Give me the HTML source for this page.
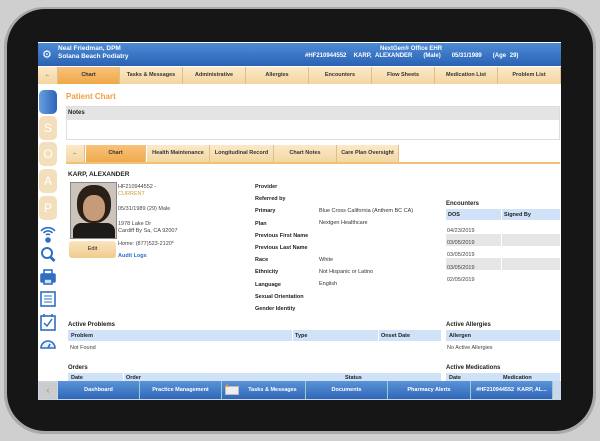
<!DOCTYPE html>
<html><head><meta charset="utf-8"><style>
*{margin:0;padding:0;box-sizing:border-box}
body{width:600px;height:441px;background:#cfcfcf;position:relative;overflow:hidden;font-family:"Liberation Sans",sans-serif;font-size:5.5px;color:#222}
.a{position:absolute;white-space:nowrap}
.b{font-weight:bold}
.tab{position:absolute;height:17px;background:linear-gradient(#fbe9c8,#f3d6a0);border-right:1px solid #e0c08a;font-weight:bold;font-size:5.5px;text-align:center;line-height:17px;color:#333}
.tab.on{background:linear-gradient(#f8c27a,#f0a848)}
.hdr{position:absolute;height:11px;background:#cfe2f7}
.bt{position:absolute;top:381px;height:18px;background:linear-gradient(#5b93d8,#2f66b8);color:#fff;font-weight:bold;font-size:5.5px;text-align:center;line-height:18px;border-right:1px solid #9cc}
.sb{position:absolute;left:39px;width:18px;height:24px;border-radius:5px;background:#f4dfbd;color:#fff;font-size:12px;text-align:center;line-height:24px}
</style></head><body>
<div class="a" style="left:4px;top:7px;width:592px;height:427px;border-radius:40px;background:#a9a9a9"></div>
<div class="a" style="left:7px;top:9px;width:586px;height:422px;border-radius:38px;background:#161616"></div>
<div class="a" style="left:38px;top:42px;width:523px;height:358px;background:#fff"></div>
<!-- header -->
<div class="a" style="left:38px;top:43px;width:523px;height:23px;background:linear-gradient(#4d8bd6,#2a62b4)"></div>
<div class="a" style="left:42px;top:48px;color:#fff;font-size:11px">⚙</div>
<div class="a b" style="left:58px;top:45px;color:#fff;font-size:6.5px;line-height:8px">Neal Friedman, DPM<br>Solana Beach Podiatry</div>
<div class="a b" style="left:380px;top:45px;color:#fff;font-size:6px;line-height:8px">NextGen® Office EHR</div>
<div class="a b" style="left:305px;top:53px;color:#fff;font-size:6px;word-spacing:2px">#HF210944552 &nbsp;KARP, ALEXANDER &nbsp; (Male) &nbsp; 05/31/1989 &nbsp; (Age 29)</div>
<!-- nav -->
<div class="tab" style="left:38px;top:67px;width:20px">←</div>
<div class="tab on" style="left:58px;top:67px;width:62px">Chart</div>
<div class="tab" style="left:120px;top:67px;width:63px">Tasks &amp; Messages</div>
<div class="tab" style="left:183px;top:67px;width:63px">Administrative</div>
<div class="tab" style="left:246px;top:67px;width:63px">Allergies</div>
<div class="tab" style="left:309px;top:67px;width:63px">Encounters</div>
<div class="tab" style="left:372px;top:67px;width:63px">Flow Sheets</div>
<div class="tab" style="left:435px;top:67px;width:63px">Medication List</div>
<div class="tab" style="left:498px;top:67px;width:63px">Problem List</div>
<!-- sidebar -->
<div class="sb" style="top:90px;background:linear-gradient(90deg,#6aa0e0,#2c64b8)"></div>
<div class="sb" style="top:116px">S</div>
<div class="sb" style="top:142px">O</div>
<div class="sb" style="top:169px">A</div>
<div class="sb" style="top:196px">P</div>
<svg class="a" style="left:38px;top:222px" width="20" height="135" fill="none" stroke="#2e6fc4" stroke-width="1.6">
<path d="M3 9a9 9 0 0 1 14 0M5.5 11a6 6 0 0 1 9 0M8 13a3 3 0 0 1 4 0"/><circle cx="10" cy="18" r="2" fill="#2e6fc4"/>
<circle cx="9" cy="31" r="5" stroke-width="2"/><path d="M12.5 35l4 4" stroke-width="3"/>
<rect x="3" y="52" width="14" height="8" rx="1" fill="#2e6fc4"/><rect x="6" y="48" width="8" height="4" fill="#fff"/><rect x="6" y="57" width="8" height="5" fill="#cfe0f5"/>
<rect x="3" y="70" width="14" height="14" fill="#fff"/><path d="M6 74h8M6 77h8M6 80h8" stroke-width="1"/>
<rect x="3" y="94" width="14" height="14"/><path d="M6 101l3 3 5-7" stroke-width="1.5"/><path d="M6 92v3M14 92v3"/>
<path d="M3 126a7 7 0 0 1 14 0z" fill="#e8f0fb"/><path d="M10 126l2-4"/>
</svg>
<!-- patient chart -->
<div class="a b" style="left:66px;top:92px;color:#f0a040;font-size:8px">Patient Chart</div>
<div class="a" style="left:66px;top:106px;width:494px;height:34px;border:1px solid #ddd"></div>
<div class="a b" style="left:67px;top:107px;width:492px;height:13px;background:#e4e4e4;padding:3px 1px;font-size:6px">Notes</div>
<div class="tab" style="left:66px;top:145px;width:19px;height:18px">←</div>
<div class="tab on" style="left:86px;top:145px;width:60px;height:18px">Chart</div>
<div class="tab" style="left:147px;top:145px;width:63px;height:18px">Health Maintenance</div>
<div class="tab" style="left:210px;top:145px;width:64px;height:18px">Longitudinal Record</div>
<div class="tab" style="left:274px;top:145px;width:63px;height:18px">Chart Notes</div>
<div class="tab" style="left:337px;top:145px;width:62px;height:18px">Care Plan Oversight</div>
<div class="a" style="left:66px;top:162px;width:494px;height:2px;background:#f3c078"></div>
<div class="a b" style="left:68px;top:171px;font-size:6.5px">KARP, ALEXANDER</div>
<div class="a" style="left:70px;top:182px;width:47px;height:57px;border:1px solid #888;background:#ccc4bb;overflow:hidden">
<div class="a" style="left:6px;top:2px;width:34px;height:38px;border-radius:45%;background:#2a2018"></div>
<div class="a" style="left:12px;top:12px;width:22px;height:26px;border-radius:45%;background:#c79a7a"></div>
<div class="a" style="left:2px;top:40px;width:42px;height:20px;border-radius:8px 8px 0 0;background:#1e1a18"></div>
</div>
<div class="a" style="left:69px;top:241px;width:47px;height:17px;border-radius:3px;background:linear-gradient(#fbe4bf,#f0cb8e);text-align:center;line-height:17px">Edit</div>
<div class="a" style="left:118px;top:184px;line-height:6.5px;color:#444">HF210944552 -<br><span style="color:#c9a040">CURRENT</span></div>
<div class="a" style="left:118px;top:206px;color:#444">05/31/1989 (29) Male</div>
<div class="a" style="left:118px;top:221px;line-height:6.5px;color:#444">1978 Lake Dr<br>Cardiff By Sa, CA 92007</div>
<div class="a" style="left:118px;top:241px;color:#444">Home: (877)523-2120*</div>
<div class="a b" style="left:118px;top:253px;color:#2a6fd0">Audit Logs</div>
<div class="a b" style="left:255px;top:181px;line-height:12.2px">Provider<br>Referred by<br>Primary<br>Plan<br>Previous First Name<br>Previous Last Name<br>Race<br>Ethnicity<br>Language<br>Sexual Orientation<br>Gender Identity</div>
<div class="a" style="left:319px;top:205px;line-height:12.2px;color:#333">Blue Cross California (Anthem BC CA)<br>Nextgen Healthcare<br><br><br>White<br>Not Hispanic or Latino<br>English</div>
<!-- encounters -->
<div class="a b" style="left:446px;top:201px;font-size:6px">Encounters</div>
<div class="hdr" style="left:446px;top:209px;width:114px"></div>
<div class="a" style="left:446px;top:234px;width:114px;height:12px;background:#e6e6e6"></div>
<div class="a" style="left:446px;top:258px;width:114px;height:12px;background:#e6e6e6"></div>
<div class="a" style="left:501px;top:209px;width:1px;height:61px;background:#fff"></div>
<div class="a b" style="left:448px;top:212px">DOS</div>
<div class="a b" style="left:504px;top:212px">Signed By</div>
<div class="a" style="left:447px;top:225px;line-height:12.2px;color:#444">04/23/2019<br>03/05/2019<br>03/05/2019<br>03/05/2019<br>02/05/2019</div>
<!-- problems -->
<div class="a b" style="left:68px;top:322px;font-size:6px">Active Problems</div>
<div class="hdr" style="left:68px;top:330px;width:373px"></div>
<div class="a" style="left:292px;top:330px;width:1px;height:11px;background:#fff"></div>
<div class="a" style="left:378px;top:330px;width:1px;height:11px;background:#fff"></div>
<div class="a b" style="left:71px;top:333px">Problem</div>
<div class="a b" style="left:295px;top:333px">Type</div>
<div class="a b" style="left:381px;top:333px">Onset Date</div>
<div class="a" style="left:70px;top:345px;color:#444">Not Found</div>
<div class="a b" style="left:446px;top:322px;font-size:6px">Active Allergies</div>
<div class="hdr" style="left:446px;top:330px;width:114px"></div>
<div class="a b" style="left:449px;top:333px">Allergen</div>
<div class="a" style="left:447px;top:345px;color:#444">No Active Allergies</div>
<div class="a b" style="left:68px;top:365px;font-size:6px">Orders</div>
<div class="hdr" style="left:68px;top:373px;width:373px"></div>
<div class="a" style="left:123px;top:373px;width:1px;height:8px;background:#fff"></div>
<div class="a b" style="left:71px;top:375px">Date</div>
<div class="a b" style="left:126px;top:375px">Order</div>
<div class="a b" style="left:345px;top:375px">Status</div>
<div class="a b" style="left:446px;top:365px;font-size:6px">Active Medications</div>
<div class="hdr" style="left:446px;top:373px;width:114px"></div>
<div class="a b" style="left:449px;top:375px">Date</div>
<div class="a b" style="left:503px;top:375px">Medication</div>
<!-- bottom bar -->
<div class="a" style="left:38px;top:381px;width:523px;height:19px;background:#c8d8ea"></div>
<div class="a" style="left:39px;top:382px;width:18px;height:17px;background:#ccc;color:#999;font-size:10px;text-align:center;line-height:17px">‹</div>
<div class="bt" style="left:58px;width:82px">Dashboard</div>
<div class="bt" style="left:140px;width:82px">Practice Management</div>
<div class="bt" style="left:222px;width:84px;padding-left:18px">Tasks &amp; Messages</div>
<div class="a" style="left:225px;top:386px;width:14px;height:9px;background:#eee;border:1px solid #bbb"></div>
<div class="a" style="left:224px;top:383px;color:#e8a020;font-size:6px">▲</div>
<div class="bt" style="left:306px;width:82px">Documents</div>
<div class="bt" style="left:388px;width:83px">Pharmacy Alerts</div>
<div class="bt" style="left:471px;width:82px">#HF210944552 &nbsp;KARP, AL...</div>
</body></html>
